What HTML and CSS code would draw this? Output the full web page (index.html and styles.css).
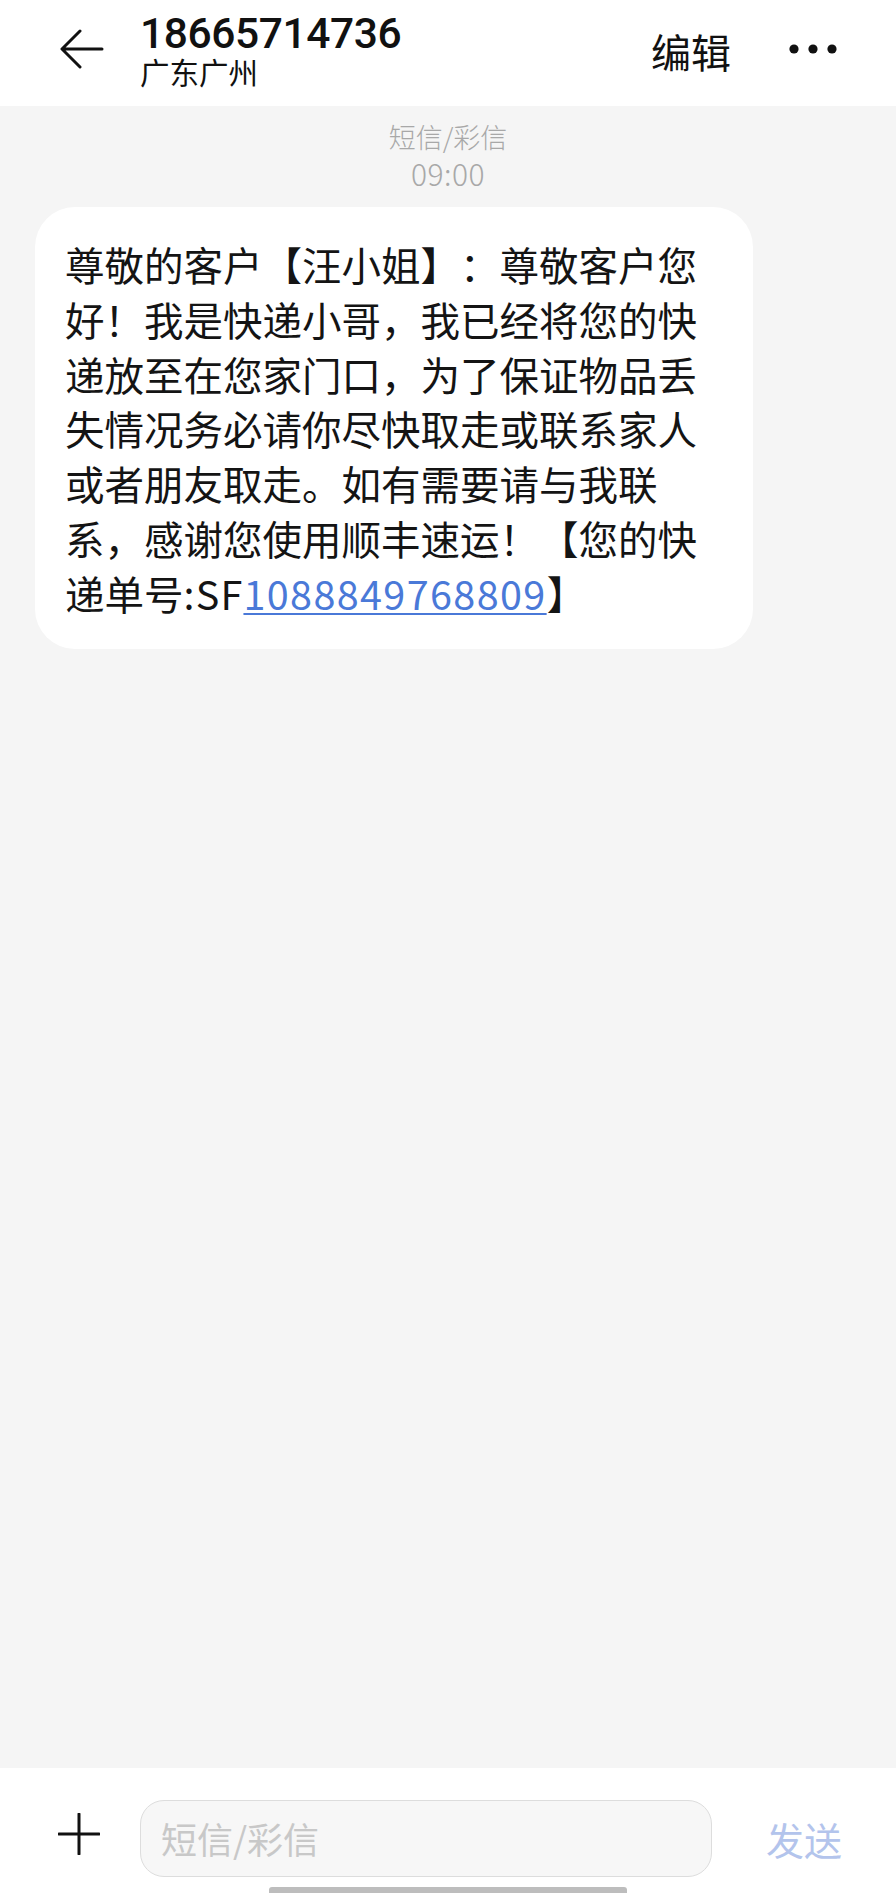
FILE: index.html
```html
<!DOCTYPE html>
<html lang="zh-CN">
<head>
<meta charset="utf-8">
<title>短信</title>
<link rel="stylesheet" href="styles.css">
</head>
<body>
<div class="screen">
  <header class="topbar">
    <svg class="back" width="44" height="40" viewBox="0 0 44 40" aria-hidden="true">
      <path d="M42 20 H3 M20 2 L2 20 L20 38" fill="none" stroke="#111" stroke-width="3" stroke-linecap="round" stroke-linejoin="round"/>
    </svg>
    <div class="title">
      <div class="number">18665714736</div>
      <div class="place">广东广州</div>
    </div>
    <div class="edit">编辑</div>
    <svg class="more" width="48" height="10" viewBox="0 0 48 10" aria-hidden="true">
      <circle cx="5" cy="5" r="4.6" fill="#111"/>
      <circle cx="24" cy="5" r="4.6" fill="#111"/>
      <circle cx="43" cy="5" r="4.6" fill="#111"/>
    </svg>
  </header>

  <main class="thread">
    <div class="stamp">
      <div class="stamp-line">短信/彩信</div>
      <div class="stamp-line time">09:00</div>
    </div>
    <div class="bubble">尊敬的客户【汪小姐】：尊敬客户您好！我是快递小哥，我已经将您的快递放至在您家门口，为了保证物品丢失情况务必请你尽快取走或联系家人或者朋友取走。如有需要请与我联系，感谢您使用顺丰速运！【您的快递单号<span class="latin">:SF</span><a class="link" href="#">1088849768809</a>】</div>
  </main>

  <footer class="composer">
    <div class="row">
      <svg class="plus" width="42" height="42" viewBox="0 0 42 42" aria-hidden="true">
        <path d="M21 1 V41 M1 21 H41" fill="none" stroke="#111" stroke-width="3" stroke-linecap="round"/>
      </svg>
      <div class="input">短信/彩信</div>
      <div class="send">发送</div>
    </div>
    <div class="home-bar"></div>
  </footer>
</div>
</body>
</html>
```

FILE: styles.css
```css
* {
  box-sizing: border-box;
}

html, body {
  margin: 0;
  padding: 0;
  background: #ffffff;
}

body {
  font-family: "Noto Sans CJK SC", "Noto Sans", sans-serif;
  color: #111;
  text-spacing-trim: space-all;
}

.screen {
  width: 896px;
  height: 1893px;
  display: flex;
  flex-direction: column;
}

/* Header */
.topbar {
  height: 106px;
  flex: 0 0 106px;
  background: #fff;
  display: flex;
  align-items: center;
  padding: 0 59px 8px 60px;
}

.back {
  flex: 0 0 auto;
  display: block;
}

.title {
  flex: 1;
  margin-left: 36px;
  display: flex;
  flex-direction: column;
}

.number {
  font-family: Roboto, "Liberation Sans", sans-serif;
  font-weight: 500;
  font-size: 42.5px;
  line-height: 44px;
  color: #111;
  letter-spacing: -0.4px;
}

.place {
  font-size: 29.5px;
  line-height: 30px;
  color: #111;
}

.edit {
  font-size: 40px;
  line-height: 44px;
  color: #111;
  margin-top: 4px;
}

.more {
  display: block;
  margin-left: 58px;
}

/* Thread */
.thread {
  flex: 1;
  background: #f5f5f5;
  padding: 13px 0 0 35px;
}

.stamp {
  width: 826px;
  text-align: center;
  color: #a8a8a8;
  font-size: 27px;
  font-weight: 300;
}

.stamp-line {
  line-height: 36px;
}

.time {
  font-size: 30px;
  letter-spacing: 0.5px;
}

.bubble {
  margin-top: 16px;
  width: 718px;
  height: 442px;
  background: #fff;
  border-radius: 40px;
  padding: 30px 50px 0 30px;
  font-size: 39.5px;
  line-height: 54.8px;
  color: #141414;
}

.latin {
  letter-spacing: 1.2px;
}

.link {
  color: #4a79d8;
  letter-spacing: 1.4px;
  text-decoration: underline;
  text-decoration-thickness: 2px;
  text-underline-offset: 3px;
}

/* Composer */
.composer {
  flex: 0 0 125px;
  background: #fff;
  padding-top: 32px;
  display: flex;
  flex-direction: column;
}

.row {
  display: flex;
  align-items: center;
  padding-left: 58px;
  height: 77px;
}

.plus {
  display: block;
  margin-bottom: 10px;
}

.input {
  margin-left: 40px;
  width: 572px;
  height: 77px;
  border: 1.5px solid #dddddd;
  border-radius: 24px;
  background: #f7f7f7;
  padding-left: 20px;
  font-size: 36px;
  line-height: 74px;
  color: #c8c8c8;
}

.send {
  margin-left: 54px;
  font-size: 38px;
  color: #b3c4ec;
}

.home-bar {
  margin: 10px auto 0;
  width: 358px;
  height: 6px;
  border-radius: 3px 3px 0 0;
  background: #bdbdbd;
}
```
